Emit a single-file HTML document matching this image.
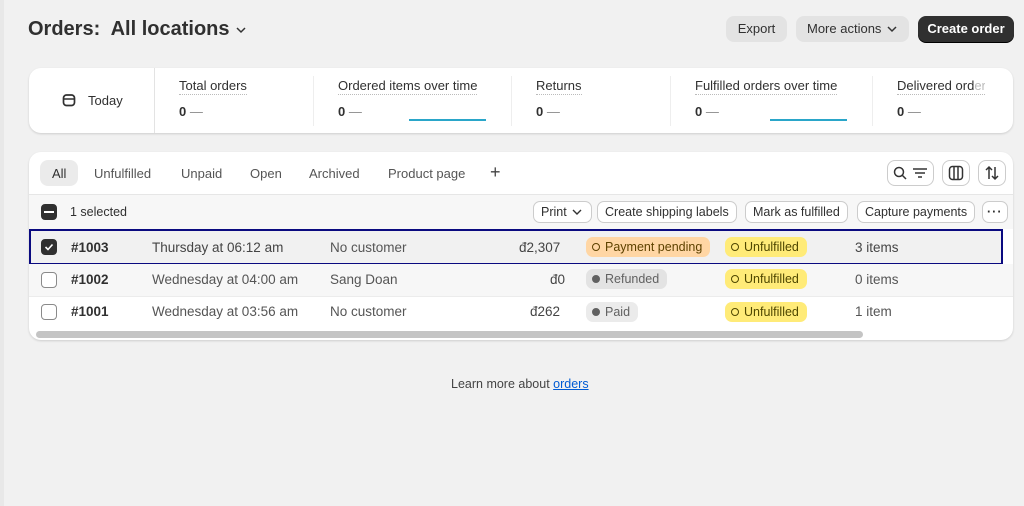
<!DOCTYPE html>
<html><head><style>
*{box-sizing:border-box;margin:0;padding:0}
body{width:1024px;height:506px;background:#f1f1f1;font-family:"Liberation Sans",sans-serif;color:#303030;position:relative;overflow:hidden;font-size:13px}
.a{position:absolute;white-space:nowrap}
.strip{left:0;top:0;width:4px;height:506px;background:#e8e8e8}
.btn{position:absolute;height:26px;border-radius:8px;background:#e3e3e3;font-size:13px;line-height:26px;text-align:center;color:#303030}
.card{position:absolute;background:#fff;border-radius:12px;box-shadow:0 1px 2px rgba(0,0,0,.15)}
.lbl{font-size:13px;color:#303030;border-bottom:1px dotted #bbb;padding-bottom:1px}
.zero{font-size:13px;font-weight:bold}
.sb{position:absolute;height:22px;border:1px solid #ccc;border-radius:7px;background:#fff;font-size:12.5px;line-height:20px;padding:0 7px;top:201px}
.row{position:absolute;left:29px;width:984px;height:32px}
.cb{position:absolute;left:12px;width:16px;height:16px;border-radius:4px;border:1.5px solid #8a8a8a;background:#fff}
.cbd{background:#303030;border-color:#303030}
.pill{position:absolute;height:20px;border-radius:7px;font-size:12.5px;line-height:20px;padding:0 8px 0 6px}
.pill i{display:inline-block;width:8px;height:8px;border-radius:50%;border:1.5px solid currentColor;margin-right:5px;vertical-align:0}
</style></head><body>
<div class="a strip"></div>
<div class="a" style="left:28px;top:18px;font-size:20px;font-weight:bold;color:#303030">Orders:&nbsp; All locations</div>
<svg class="a" style="left:235px;top:25px" width="12" height="10"><path d="M2 3l4 4 4-4" fill="none" stroke="#333" stroke-width="1.5"/></svg>
<div class="btn" style="left:726px;top:16px;width:61px">Export</div>
<div class="btn" style="left:796px;top:16px;width:113px;text-align:left;padding-left:11px">More actions</div>
<svg class="a" style="left:886px;top:24px" width="12" height="10"><path d="M2 3l4 4 4-4" fill="none" stroke="#333" stroke-width="1.5"/></svg>
<div class="btn" style="left:918px;top:16px;width:96px;background:#303030;color:#fff;font-weight:bold;box-shadow:0 1px 0 #000">Create order</div>

<div class="card" style="left:29px;top:68px;width:984px;height:65px"></div>
<div class="a" style="left:154px;top:68px;width:1px;height:65px;background:#e3e3e3"></div>
<svg class="a" style="left:62px;top:93px" width="14" height="14"><rect x="1.5" y="2" width="11" height="10.5" rx="3" fill="none" stroke="#303030" stroke-width="1.7"/><line x1="2" y1="6" x2="12" y2="6" stroke="#303030" stroke-width="1.5"/></svg>
<div class="a" style="left:88px;top:93px;font-size:13px">Today</div>
<div class="a lbl" style="left:179px;top:78px">Total orders</div><div class="a zero" style="left:179px;top:104px">0 <span style="font-weight:normal;color:#888">&mdash;</span></div>
<div class="a" style="left:313px;top:76px;width:1px;height:50px;background:#eee"></div>
<div class="a lbl" style="left:338px;top:78px">Ordered items over time</div><div class="a zero" style="left:338px;top:104px">0 <span style="font-weight:normal;color:#888">&mdash;</span></div>
<div class="a" style="left:409px;top:119px;width:77px;height:2px;background:#2aa6c9"></div>
<div class="a" style="left:511px;top:76px;width:1px;height:50px;background:#eee"></div>
<div class="a lbl" style="left:536px;top:78px">Returns</div><div class="a zero" style="left:536px;top:104px">0 <span style="font-weight:normal;color:#888">&mdash;</span></div>
<div class="a" style="left:670px;top:76px;width:1px;height:50px;background:#eee"></div>
<div class="a lbl" style="left:695px;top:78px">Fulfilled orders over time</div><div class="a zero" style="left:695px;top:104px">0 <span style="font-weight:normal;color:#888">&mdash;</span></div>
<div class="a" style="left:770px;top:119px;width:77px;height:2px;background:#2aa6c9"></div>
<div class="a" style="left:872px;top:76px;width:1px;height:50px;background:#eee"></div>
<div class="a lbl" style="left:897px;top:78px;width:88px;overflow:hidden;color:#303030">Delivered ord<span style="color:#bbb">ers</span></div><div class="a zero" style="left:897px;top:104px">0 <span style="font-weight:normal;color:#888">&mdash;</span></div>

<div class="card" style="left:29px;top:152px;width:984px;height:188px;overflow:hidden">
<div class="a" style="left:0;top:42px;width:984px;height:1px;background:#e6e6e6"></div>
<div class="a" style="left:0;top:43px;width:984px;height:34px;background:#f7f7f7"></div>
<div class="a" style="left:0;top:144px;width:984px;height:1px;background:#ececec"></div>
</div>
<div class="a" style="left:40px;top:160px;width:38px;height:26px;border-radius:8px;background:#ebebeb"></div>
<div class="a" style="left:52px;top:166px;font-size:13px">All</div>
<div class="a" style="left:94px;top:166px;color:#555">Unfulfilled</div>
<div class="a" style="left:181px;top:166px;color:#555">Unpaid</div>
<div class="a" style="left:250px;top:166px;color:#555">Open</div>
<div class="a" style="left:309px;top:166px;color:#555">Archived</div>
<div class="a" style="left:388px;top:166px;color:#555">Product page</div>
<div class="a" style="left:490px;top:162px;font-size:18px;color:#444">+</div>
<div class="a" style="left:887px;top:160px;width:47px;height:26px;border:1px solid #ccc;border-radius:8px"></div>
<svg class="a" style="left:893px;top:166px" width="36" height="14"><circle cx="6" cy="6" r="4.5" fill="none" stroke="#333" stroke-width="1.5"/><line x1="9.5" y1="9.5" x2="13" y2="13" stroke="#333" stroke-width="1.5"/><path d="M20 3h14M22 7h10M25 11h4" stroke="#333" stroke-width="1.5"/></svg>
<div class="a" style="left:942px;top:160px;width:28px;height:26px;border:1px solid #ccc;border-radius:8px"></div>
<svg class="a" style="left:948px;top:165px" width="16" height="16"><rect x="1.5" y="1.5" width="13" height="13" rx="3" fill="none" stroke="#333" stroke-width="1.5"/><path d="M6 2v12M10 2v12" stroke="#333" stroke-width="1.5"/></svg>
<div class="a" style="left:978px;top:160px;width:28px;height:26px;border:1px solid #ccc;border-radius:8px"></div>
<svg class="a" style="left:984px;top:165px" width="16" height="16"><path d="M5 14V2M2 5l3-3 3 3M11 2v12M8 11l3 3 3-3" fill="none" stroke="#333" stroke-width="1.5"/></svg>

<div class="a cb cbd" style="left:41px;top:204px"></div><div class="a" style="left:44px;top:211px;width:10px;height:2px;background:#fff"></div>
<div class="a" style="left:70px;top:205px;font-size:12.5px">1 selected</div>
<div class="sb" style="left:533px;padding-right:24px">Print</div>
<svg class="a" style="left:571px;top:207px" width="12" height="10"><path d="M2 3l4 4 4-4" fill="none" stroke="#333" stroke-width="1.4"/></svg>
<div class="sb" style="left:597px">Create shipping labels</div>
<div class="sb" style="left:745px">Mark as fulfilled</div>
<div class="sb" style="left:857px">Capture payments</div>
<div class="sb" style="left:982px;padding:0 4px;font-weight:bold;letter-spacing:1px">···</div>

<div class="row" style="top:229px;background:#f1f1f1;left:29px;width:974px;height:36px;border:2.5px solid #0a0a80"></div>
<div class="a cb cbd" style="left:41px;top:239px"></div>
<svg class="a" style="left:43px;top:241px" width="12" height="12"><path d="M2.5 6l2.5 2.5 4.5-5" fill="none" stroke="#fff" stroke-width="1.6"/></svg>
<div class="a" style="left:71px;top:240px;font-weight:bold;font-size:13.5px">#1003</div>
<div class="a" style="left:152px;top:240px;font-size:13.5px;color:#444">Thursday at 06:12 am</div>
<div class="a" style="left:330px;top:240px;font-size:13.5px;color:#555">No customer</div>
<div class="a" style="left:519px;top:240px;font-size:13.5px;color:#444">đ2,307</div>
<div class="pill a" style="left:586px;top:237px;background:#ffd6a4;color:#5e4200"><i></i>Payment pending</div>
<div class="pill a" style="left:725px;top:237px;background:#ffeb78;color:#4f4700"><i></i>Unfulfilled</div>
<div class="a" style="left:855px;top:240px;font-size:13.5px;color:#444">3 items</div>

<div class="row" style="top:264px;background:#f7f7f7"></div>
<div class="a cb" style="left:41px;top:272px"></div>
<div class="a" style="left:71px;top:272px;font-weight:bold;font-size:13.5px">#1002</div>
<div class="a" style="left:152px;top:272px;font-size:13.5px;color:#555">Wednesday at 04:00 am</div>
<div class="a" style="left:330px;top:272px;font-size:13.5px;color:#555">Sang Doan</div>
<div class="a" style="left:550px;top:272px;font-size:13.5px;color:#444">đ0</div>
<div class="pill a" style="left:586px;top:269px;background:#e3e3e3;color:#616161"><i style="background:#616161;border-color:#616161"></i>Refunded</div>
<div class="pill a" style="left:725px;top:269px;background:#ffeb78;color:#4f4700"><i></i>Unfulfilled</div>
<div class="a" style="left:855px;top:272px;font-size:13.5px;color:#555">0 items</div>

<div class="a cb" style="left:41px;top:304px"></div>
<div class="a" style="left:71px;top:304px;font-weight:bold;font-size:13.5px">#1001</div>
<div class="a" style="left:152px;top:304px;font-size:13.5px;color:#555">Wednesday at 03:56 am</div>
<div class="a" style="left:330px;top:304px;font-size:13.5px;color:#555">No customer</div>
<div class="a" style="left:530px;top:304px;font-size:13.5px;color:#444">đ262</div>
<div class="pill a" style="left:586px;top:302px;background:#ebebeb;color:#616161"><i style="background:#616161;border-color:#616161"></i>Paid</div>
<div class="pill a" style="left:725px;top:302px;background:#ffeb78;color:#4f4700"><i></i>Unfulfilled</div>
<div class="a" style="left:855px;top:304px;font-size:13.5px;color:#555">1 item</div>

<div class="a" style="left:36px;top:331px;width:827px;height:7px;border-radius:4px;background:#c4c4c4"></div>

<div class="a" style="left:451px;top:377px;font-size:12.5px;color:#444">Learn more about <span style="color:#005bd3;text-decoration:underline">orders</span></div>
</body></html>
